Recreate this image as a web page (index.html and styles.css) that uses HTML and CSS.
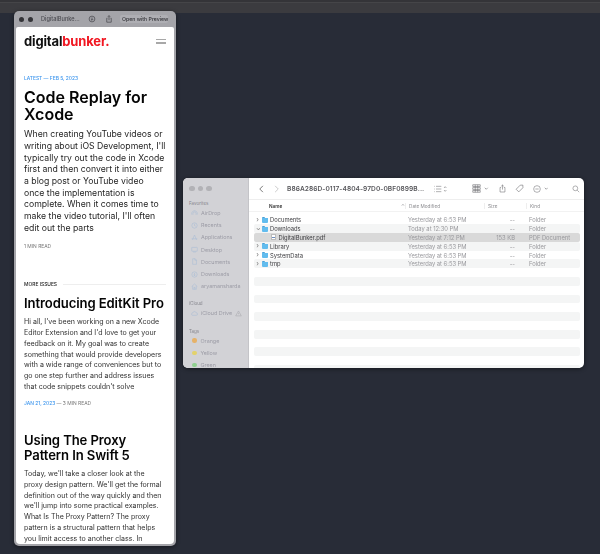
FILE: index.html
```html
<!DOCTYPE html>
<html lang="en">
<head>
<meta charset="utf-8">
<title>Desktop</title>
<link rel="stylesheet" href="styles.css">
</head>
<body>
<div class="menubar"></div>

<section class="preview">
  <header class="qlbar">
    <span class="ql-close"></span><span class="ql-close"></span>
    <span class="ql-title">DigitalBunke...</span>
    <svg class="ql-icon" viewBox="0 0 10 10"><circle cx="5" cy="5" r="3.6"/><path d="M5 3v3.4M3.6 5.2 5 6.6l1.4-1.4"/></svg>
    <svg class="ql-icon ql-share" viewBox="0 0 10 10"><path d="M3 4H2.2v5h5.6V4H7M5 6.5V.8M3.6 2.2 5 .8l1.4 1.4"/></svg>
    <span class="ql-open">Open with Preview</span>
  </header>
  <div class="page">
    <div class="site-head">
      <div class="logo">digital<span class="logo-red">bunker.</span></div>
      <div class="burger"><i></i><i></i></div>
    </div>
    <div class="latest">LATEST — FEB 5, 2023</div>
    <h1>Code Replay for<br>Xcode</h1>
    <p class="lead">When creating YouTube videos or<br>writing about iOS Development, I'll<br>typically try out the code in Xcode<br>first and then convert it into either<br>a blog post or YouTube video<br>once the implementation is<br>complete. When it comes time to<br>make the video tutorial, I'll often<br>edit out the parts</p>
    <div class="meta">1 MIN READ</div>
    <div class="more"><span>MORE ISSUES</span><i></i></div>
    <h2>Introducing EditKit Pro</h2>
    <p class="body">Hi all, I've been working on a new Xcode<br>Editor Extension and I'd love to get your<br>feedback on it. My goal was to create<br>something that would provide developers<br>with a wide range of conveniences but to<br>go one step further and address issues<br>that code snippets couldn't solve</p>
    <div class="meta meta-date"><b>JAN 21, 2023</b> — 3 MIN READ</div>
    <h2 class="second">Using The Proxy<br>Pattern In Swift 5</h2>
    <p class="body body-last">Today, we'll take a closer look at the<br>proxy design pattern. We'll get the formal<br>definition out of the way quickly and then<br>we'll jump into some practical examples.<br>What Is The Proxy Pattern? The proxy<br>pattern is a structural pattern that helps<br>you limit access to another class. In</p>
  </div>
</section>

<section class="finder">
  <aside class="side">
    <div class="lights"><i></i><i></i><i></i></div>
    <div class="side-h">Favorites</div>
    <div class="side-i"><svg viewBox="0 0 10 10"><path d="M1.5 7a4 4 0 1 1 7 0M3.2 6.4a2.2 2.2 0 1 1 3.6 0"/></svg>AirDrop</div>
    <div class="side-i"><svg viewBox="0 0 10 10"><circle cx="5" cy="5" r="3.8"/><path d="M5 2.6V5l1.6 1"/></svg>Recents</div>
    <div class="side-i"><svg viewBox="0 0 10 10"><path d="M5 1.5 2 8.5M5 1.5l3 7M1 6.8h8"/></svg>Applications</div>
    <div class="side-i"><svg viewBox="0 0 10 10"><rect x="1" y="2" width="8" height="5.5" rx=".6"/><path d="M3 8.6h4"/></svg>Desktop</div>
    <div class="side-i"><svg viewBox="0 0 10 10"><path d="M2.4 1h3.4L7.8 3v6H2.4zM5.6 1v2.2h2.2"/></svg>Documents</div>
    <div class="side-i"><svg viewBox="0 0 10 10"><circle cx="5" cy="5" r="3.8"/><path d="M5 2.8v4M3.4 5.2 5 6.8l1.6-1.6"/></svg>Downloads</div>
    <div class="side-i"><svg viewBox="0 0 10 10"><path d="M1 5 5 1.4 9 5M2.4 4.2V9h5.2V4.2"/><path d="M4.2 9V6.4h1.6V9"/></svg>aryamansharda</div>
    <div class="side-h side-gap">iCloud</div>
    <div class="side-i"><svg viewBox="0 0 10 10"><path d="M2.6 7.6a1.7 1.7 0 0 1-.2-3.4 2.6 2.6 0 0 1 5-.2 1.8 1.8 0 0 1 .2 3.6z"/></svg>iCloud Drive<svg class="warn" viewBox="0 0 10 10"><path d="M5 1.4 9 8.4H1zM5 4v2.2"/></svg></div>
    <div class="side-h side-gap">Tags</div>
    <div class="side-i"><u class="dot orange"></u>Orange</div>
    <div class="side-i"><u class="dot yellow"></u>Yellow</div>
    <div class="side-i"><u class="dot green"></u>Green</div>
  </aside>
  <div class="main">
    <div class="toolbar">
      <svg class="nav" viewBox="0 0 10 12"><path d="M7 1.5 2.5 6 7 10.5"/></svg>
      <svg class="nav nav-off" viewBox="0 0 10 12"><path d="M3 1.5 7.500 6 3 10.500"/></svg>
      <span class="path">B86A286D-0117-4804-97D0-0BF0899B...</span>
      <svg class="tool list" viewBox="0 0 20 12"><path d="M1 2h1M1 6h1M1 10h1M4 2h8M4 6h8M4 10h8M16 4.500l1.800-2 1.800 2M16 7.500l1.800 2 1.800-2"/></svg>
      <svg class="tool grid" viewBox="0 0 12 12"><path d="M1 1h10v2.300H1zM1 4.800h10v2.400H1zM1 8.700h10V11H1zM4.300 1v10M7.700 1v10"/></svg>
      <svg class="tool chev" viewBox="0 0 6 4"><path d="m1 1 2 2 2-2"/></svg>
      <svg class="tool share" viewBox="0 0 10 12"><path d="M3 4.500H1.500V11h7V4.500H7M5 7.500V1M3.200 2.700 5 1l1.800 1.700"/></svg>
      <svg class="tool tag" viewBox="0 0 12 12"><path d="M1.500 7 7 1.500h3.500V5L5 10.500zM8.600 3.400h.01"/></svg>
      <svg class="tool more-ic" viewBox="0 0 12 12"><circle cx="6" cy="6" r="5"/><path d="M3.500 6h5"/></svg>
      <svg class="tool chev" viewBox="0 0 6 4"><path d="m1 1 2 2 2-2"/></svg>
      <svg class="tool search" viewBox="0 0 12 12"><circle cx="5" cy="5" r="3.600"/><path d="m7.800 7.800 3 3"/></svg>
    </div>
    <div class="cols">
      <span class="c-name">Name</span><span class="c-sort">⌃</span>
      <span class="c-date">Date Modified</span>
      <span class="c-size">Size</span>
      <span class="c-kind">Kind</span>
    </div>
    <div class="rows">
      <div class="row"><span class="c-name"><em class="arrow">›</em><u class="folder"></u>Documents</span><span class="c-date">Yesterday at 6:53 PM</span><span class="c-size">--</span><span class="c-kind">Folder</span></div>
      <div class="row alt"><span class="c-name"><em class="arrow open">›</em><u class="folder"></u>Downloads</span><span class="c-date">Today at 12:30 PM</span><span class="c-size">--</span><span class="c-kind">Folder</span></div>
      <div class="row sel"><span class="c-name child"><u class="file"></u>DigitalBunker.pdf</span><span class="c-date">Yesterday at 7:12 PM</span><span class="c-size">153 KB</span><span class="c-kind">PDF Document</span></div>
      <div class="row alt"><span class="c-name"><em class="arrow">›</em><u class="folder"></u>Library</span><span class="c-date">Yesterday at 6:53 PM</span><span class="c-size">--</span><span class="c-kind">Folder</span></div>
      <div class="row"><span class="c-name"><em class="arrow">›</em><u class="folder"></u>SystemData</span><span class="c-date">Yesterday at 6:53 PM</span><span class="c-size">--</span><span class="c-kind">Folder</span></div>
      <div class="row alt"><span class="c-name"><em class="arrow">›</em><u class="folder"></u>tmp</span><span class="c-date">Yesterday at 6:53 PM</span><span class="c-size">--</span><span class="c-kind">Folder</span></div>
      <div class="row"></div><div class="row alt"></div><div class="row"></div><div class="row alt"></div><div class="row"></div><div class="row alt"></div><div class="row"></div><div class="row alt"></div><div class="row"></div><div class="row alt"></div><div class="row"></div><div class="row alt"></div>
    </div>
  </div>
</section>
</body>
</html>
```

FILE: styles.css
```css
* { box-sizing: border-box; }
html, body { margin: 0; height: 100%; }
body {
  position: relative;
  width: 600px;
  height: 554px;
  overflow: hidden;
  background: #282c37;
  font-family: Inter, "Liberation Sans", sans-serif;
}
.menubar {
  height: 13px;
  background: #3b3b3f;
  border-top: 2px solid #343438;
  box-shadow: inset 0 1px 0 #454548;
}

/* Quick Look window */
.preview {
  position: absolute;
  left: 14px;
  top: 11px;
  width: 162px;
  height: 535px;
  padding: 0 2px 2px;
  background: #a4a4a9;
  border-radius: 5px;
  display: flex;
  flex-direction: column;
  box-shadow: 0 1px 4px rgba(0,0,0,.45);
}
.qlbar {
  height: 16px;
  flex: none;
  display: flex;
  align-items: center;
  padding-left: 3px;
  color: #333338;
  font-size: 5.2px;
  font-weight: 500;
  filter: blur(.25px);
}
.ql-close {
  width: 5px;
  height: 5px;
  margin-right: 4px;
  border-radius: 50%;
  background: #333337;
}
.ql-title { margin-left: 4px; width: 47px; font-size: 5.6px; color: #4c4c52; }
.ql-icon { width: 8px; height: 8px; fill: none; stroke: #47474c; stroke-width: .9; }
.ql-share { margin-left: 9px; }
.ql-open { margin-left: 7px; padding: 1px 0 1px 2px; background: #aeaeb3; border-radius: 2px; white-space: nowrap; }
.page {
  flex: 1;
  min-height: 0;
  overflow: hidden;
  padding: 0 8px;
  background: #fff;
  border-radius: 2px 2px 4px 4px;
  color: #050505;
  filter: blur(.3px);
  white-space: nowrap;
}
.site-head { display: flex; justify-content: space-between; align-items: center; height: 28px; }
.logo { font-size: 13px; font-weight: 700; letter-spacing: -.15px; color: #111; }
.logo-red { color: #f11722; }
.burger { display: flex; flex-direction: column; gap: 2px; }
.burger i { display: block; width: 10px; height: 1.500px; background: #a8a8a8; }
.latest { margin-top: 19px; font-size: 4.900px; font-weight: 500; color: #3f97ee; line-height: 8px; }
h1 { margin: 6.500px 0 0; font-size: 16px; line-height: 17px; font-weight: 600; }
.lead { margin: 6.700px 0 0; font-size: 8.700px; line-height: 11.670px; color: #1f1f1f; }
.meta { margin-top: 8px; font-size: 4.900px; line-height: 8px; color: #777; }
.more { margin-top: 30px; display: flex; align-items: center; gap: 6px; font-size: 4.900px; font-weight: 500; color: #222; line-height: 8px; }
.more i { flex: 1; height: 1px; background: #eee; }
h2 { margin: 7.300px 0 0; font-size: 13.100px; line-height: 15.300px; font-weight: 600; letter-spacing: -.1px; }
.second { margin-top: 25.400px; }
.body { margin: 6px 0 0; font-size: 7.050px; line-height: 10.900px; color: #333; }
.body-last { margin-top: 5.600px; }
.meta-date { margin-top: 6px; }
.meta-date b { color: #3f97ee; font-weight: 500; }

/* Finder window */
.finder {
  position: absolute;
  left: 183px;
  top: 178px;
  width: 401px;
  height: 190px;
  display: flex;
  overflow: hidden;
  border-radius: 5px;
  background: #fff;
  filter: blur(.25px);
  box-shadow: 0 1px 4px rgba(0,0,0,.45);
}
.side { width: 66px; flex: none; padding: 0 0 0 6px; background: #d2d2d6; border-right: 1px solid #c4c4c8; color: #9c9ca6; font-size: 5.400px; }
.lights { display: flex; gap: 3px; height: 21px; padding-top: 7.500px; }
.lights i { width: 5.500px; height: 5.500px; border-radius: 50%; background: #b2b2b6; }
.side-h { font-size: 4.500px; line-height: 8px; color: #85858c; margin-top: 1px; }
.side-gap { margin-top: 8px; }
.side-i { height: 12.200px; display: flex; align-items: center; gap: 3px; padding-left: 2px; white-space: nowrap; }
.side-h + .side-i { margin-top: -1px; }
.side-i svg { width: 7px; height: 7px; flex: none; fill: none; stroke: #a9bdd5; stroke-width: .8; }
.side-i .warn { stroke: #a8a8ae; }
.dot { width: 4.500px; height: 4.500px; margin: 0 1px; flex: none; border-radius: 50%; }
.orange { background: #e6b268; }
.yellow { background: #e3d26b; }
.green { background: #8fd08f; }

.main { flex: 1; min-width: 0; display: flex; flex-direction: column; }
.toolbar { height: 22px; flex: none; display: flex; align-items: center; padding-left: 9px; border-bottom: 1px solid #eee; }
.nav { width: 7px; height: 10px; fill: none; stroke: #555; stroke-width: 1.100; }
.nav-off { margin-left: 8px; stroke: #bcbcbc; }
.path { margin-left: 7px; width: 145px; font-size: 6.600px; font-weight: 600; color: #58585c; white-space: nowrap; letter-spacing: .05px; }
.tool { flex: none; fill: none; stroke: #6b6b70; stroke-width: .8; }
.list { width: 16px; height: 8px; }
.grid { width: 9px; height: 9px; margin-left: 24px; }
.chev { width: 4.500px; height: 3px; margin-left: 3px; }
.share { width: 7px; height: 9px; margin-left: 10px; }
.tag { width: 9px; height: 9px; margin-left: 9px; }
.more-ic { width: 8px; height: 8px; margin-left: 9px; }
.search { width: 8px; height: 8px; margin-left: 24px; }

.cols { height: 12px; flex: none; display: flex; align-items: center; font-size: 4.700px; color: #8a8a8e; padding-left: 5px; border-bottom: 1px solid #f2f2f2; }
.cols .c-name { color: #333; font-weight: 600; width: 133px; padding-left: 15px; }
.c-sort { width: 18px; text-align: right; font-size: 5px; }
.c-date { width: 79px; padding-left: 3px; }
.c-size { width: 42px; padding-left: 3px; }
.c-kind { padding-left: 3px; }
.cols .c-date, .cols .c-size, .cols .c-kind { border-left: 1px solid #eee; }
.rows { flex: 1; overflow: hidden; padding: 3.500px 4px 0 5px; }
.row { height: 8.800px; display: flex; align-items: center; border-radius: 2px; font-size: 5.800px; color: #98989c; white-space: nowrap; }
.alt { background: #f4f5f5; }
.sel { background: #d9d9d9; }
.row .c-name { width: 151px; display: flex; align-items: center; color: #3d3d40; }
.row .c-date { width: 79px; }
.row .c-size { width: 31px; padding-left: 0; text-align: right; margin-right: 11px; }
.row .c-kind { padding-left: 3px; }
.child { padding-left: 14px; }
.arrow { width: 7px; text-align: center; font-style: normal; font-size: 7px; line-height: 8px; color: #777; }
.open { transform: rotate(90deg); }
.folder { position: relative; width: 6.500px; height: 5px; margin: 1px 2px 0 .5px; border-radius: 0 0 1px 1px; background: #62bcee; }
.folder::before { content: ""; position: absolute; left: 0; top: -1.200px; width: 3px; height: 1.400px; border-radius: 1px 1px 0 0; background: #4a9fd6; }
.file { width: 4.500px; height: 6px; margin: 0 3px; background: linear-gradient(#fff 55%, #6f8fc0 55%, #6f8fc0 70%, #fff 70%); border: .4px solid #bbb; }
```
